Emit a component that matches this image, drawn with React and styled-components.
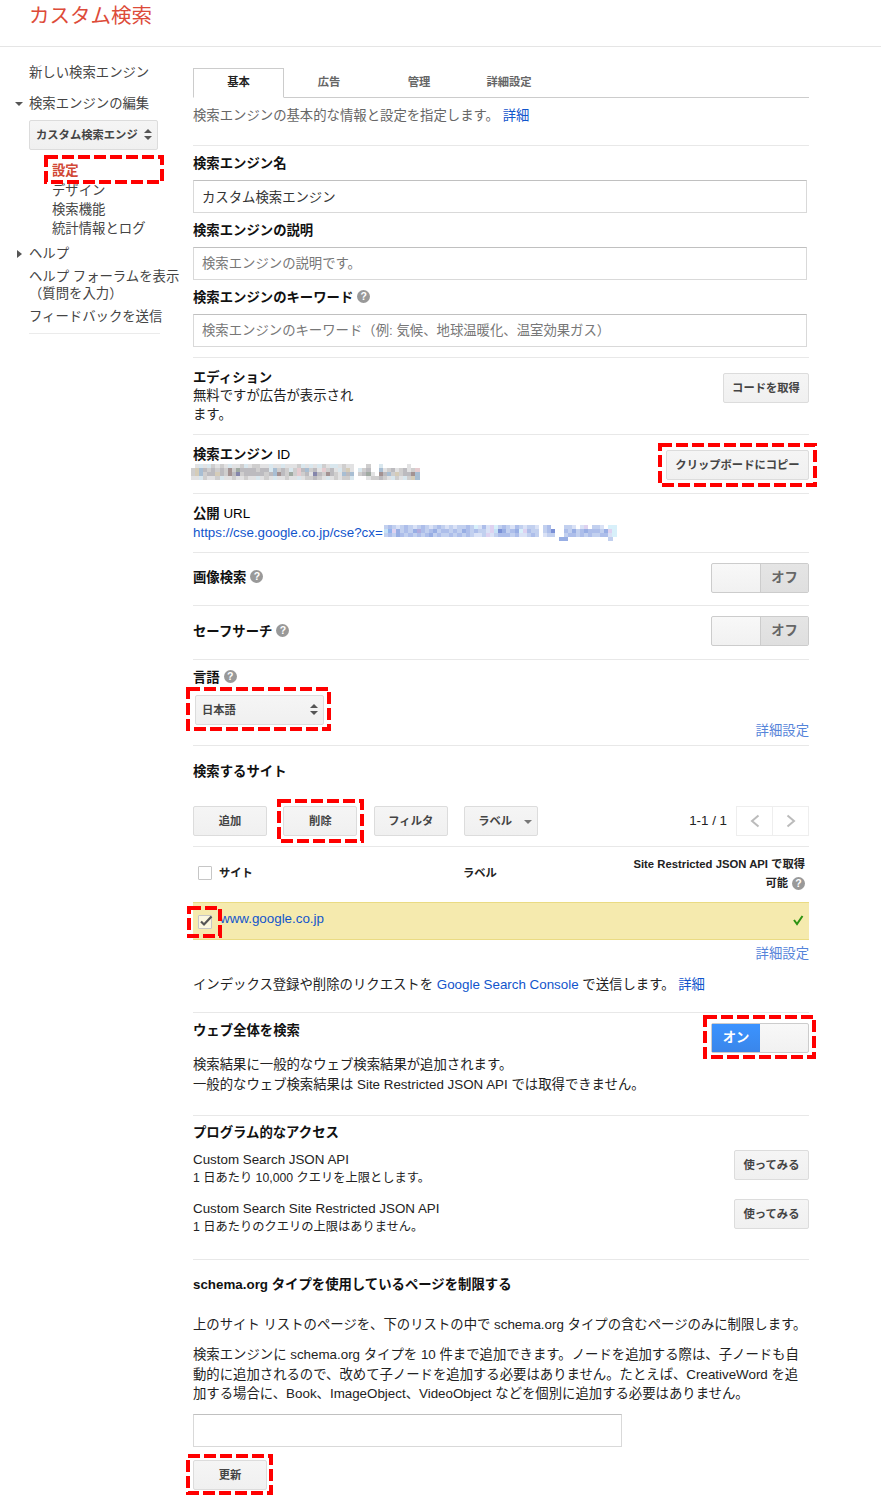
import React from "react";
import styled, { createGlobalStyle } from "styled-components";

const GlobalStyle = createGlobalStyle`
*{
  box-sizing: border-box;
}
body{
  margin: 0;
  background: #fff;
  color: #222;
  font-family: "Liberation Sans", "Noto Sans CJK JP", sans-serif;
  font-size: 13.36px;
  line-height: 19px;
}
a{
  color: #15c;
  text-decoration: none;
}
`

const Page = styled.div`
width: 881px;
height: 1500px;
overflow: hidden;
`

const Header = styled.header`
height: 47px;
border-bottom: 1px solid #e5e5e5;
padding-left: 29px;
`

const Logo = styled.h1`
margin: 0;
font-size: 20.5px;
line-height: 31px;
font-weight: 400;
color: #dd4b39;
`

const Columns = styled.div`
display: flex;
`

const Sidebar = styled.nav`
width: 193px;
flex: none;
padding: 16px 0 0 29px;
color: #444;
white-space: nowrap;
`

const NavItem = styled.div`
display: flex;
align-items: center;
height: ${props => props.$h || 19}px;
margin-top: ${props => props.$top || 0}px;
margin-left: ${props => props.$indent || 0}px;
color: ${props => props.$active ? "#d14836" : "inherit"};
font-weight: ${props => props.$active ? 700 : 400};
position: relative;
`

const Caret = styled.span`
width: 0;
height: 0;
margin-left: -14px;
margin-right: 6px;
border: 4px solid transparent;
border-top-color: #555;
border-bottom-width: 0;
${props => props.$right && `
border: 4px solid transparent;
border-left: 5px solid #555;
border-right-width: 0;
margin-left: -12px;
margin-right: 7px;
`}
`

const NavRule = styled.div`
width: 131px;
margin-top: 7px;
border-top: 1px solid #ebebeb;
`

const Main = styled.main`
width: 616px;
flex: none;
padding-top: 21px;
`

const Tabs = styled.div`
display: flex;
height: 30px;
border-bottom: 1px solid #ccc;
`

const Tab = styled.div`
width: ${props => props.$active ? 91 : 90}px;
height: 30px;
line-height: 27px;
text-align: center;
font-size: 11.3px;
font-weight: 700;
color: ${props => props.$active ? "#222" : "#666"};
border: 1px solid ${props => props.$active ? "#ccc" : "transparent"};
border-bottom-color: ${props => props.$active ? "#fff" : "transparent"};
`

const Section = styled.section`
height: ${props => props.$h}px;
padding-top: ${props => props.$pt || 0}px;
border-bottom: ${props => props.$last ? "none" : "1px solid #e8e8e8"};
`

const Row = styled.div`
display: flex;
justify-content: ${props => props.$start ? "flex-start" : "space-between"};
align-items: flex-start;
margin-top: ${props => props.$top || 0}px;
margin-left: ${props => props.$left || 0}px;
`

const Label = styled.div`
display: flex;
align-items: center;
height: 19px;
font-weight: 700;
color: #111;
white-space: pre;
`

const Latin = styled.span`
font-weight: 400;
color: #000;
`

const HelpDot = styled.span`
width: 13px;
height: 13px;
margin: -2px 0 0 4px;
border-radius: 50%;
background: #999;
color: #fff;
font-size: 10.5px;
font-weight: 700;
line-height: 13px;
text-align: center;
display: inline-block;
flex: none;
`

const Text = styled.div`
margin-top: ${props => props.$top || 0}px;
font-size: ${props => props.$small ? 12.25 : 13.36}px;
line-height: ${props => props.$lh || 19}px;
color: ${props => props.$muted ? "#666" : "#222"};
white-space: nowrap;
`

const Input = styled.input`
display: block;
width: ${props => props.$w || 614}px;
height: 33px;
margin: ${props => props.$top || 7}px 0 8px;
padding: 0 8px 1px;
border: 1px solid #d9d9d9;
border-top-color: #c0c0c0;
background: #fff;
color: #333;
font: inherit;
outline: none;
&::placeholder{
  color: #777;
  opacity: 1;
}
`

const Button = styled.button`
position: relative;
display: flex;
align-items: center;
justify-content: ${props => props.$menu ? "space-between" : "center"};
width: ${props => props.$w || 74}px;
height: 30px;
flex: none;
padding: ${props => props.$menu ? `0 5px 2px ${props.$left || 6}px` : "0 0 2px"};
border: 1px solid #dcdcdc;
border-radius: 2px;
background: linear-gradient(#f5f5f5, #f0f0f0);
color: #444;
font-family: inherit;
font-size: 11.3px;
font-weight: 700;
white-space: nowrap;
`

const Spinner = styled.span`
display: grid;
gap: 3px;
&::before, &::after{
  content: "";
  border: 4px solid transparent;
}
&::before{
  border-top: 0;
  border-bottom-color: #555;
}
&::after{
  border-bottom: 0;
  border-top-color: #555;
}
`

const DownArrow = styled.span`
margin-top: 3px;
border: 4px solid transparent;
border-top-color: #777;
border-bottom: 0;
`

const Switch = styled.div`
position: relative;
display: flex;
width: 98px;
height: 30px;
flex: none;
border: 1px solid #ccc;
border-radius: 2px;
background: linear-gradient(#f8f8f8, #f1f1f1);
`

const SwitchFace = styled.div`
width: 48px;
height: 28px;
line-height: 28px;
text-align: center;
font-size: 13.33px;
font-weight: 700;
color: ${props => props.$on ? "#fff" : "#666"};
background: ${props => props.$on ? "linear-gradient(#3b93ff, #3a86ea)" : "linear-gradient(#e5e5e5, #dfdfdf)"};
border-left: ${props => props.$on ? "none" : "1px solid #ccc"};
margin-left: ${props => props.$on ? "0" : "auto"};
`

const MoreLink = styled.a`
opacity: .72;
`

const Toolbar = styled.div`
display: flex;
gap: 16.4px;
margin-top: 25px;
`

const Pager = styled.div`
display: flex;
margin-left: auto;
line-height: 29px;
`

const PagerButton = styled.span`
display: flex;
align-items: center;
justify-content: center;
width: 37px;
height: 30px;
margin-left: ${props => props.$first ? 9 : -1}px;
border: 1px solid #eee;
`

const TableHead = styled.div`
display: grid;
grid-template-columns: 26px 239px 1fr;
height: 55px;
padding: 8px 4px 0 5px;
font-size: 11.3px;
font-weight: 700;
`

const HeadCell = styled.div`
padding-top: ${props => props.$pt || 0}px;
margin-left: ${props => props.$left || 0}px;
text-align: ${props => props.$right ? "right" : "left"};
line-height: 19px;
`

const CheckBox = styled.span`
display: block;
width: 14px;
height: 14px;
margin-top: ${props => props.$top}px;
border: 1px solid #c6c6c6;
border-radius: 1px;
background: rgba(255, 255, 255, .6);
position: relative;
`

const CheckMark = styled.svg`
display: block;
overflow: visible;
`

const SiteRow = styled.div`
display: flex;
height: 38px;
padding: 0 5px;
background: #f5eaae;
border: solid #eadb83;
border-width: 1px 0;
`

const SiteLink = styled.a`
margin: 6px auto 0 8px;
`

// marker drawn over a control, in px around its parent
const Marker = styled.svg`
position: absolute;
z-index: 2;
left: ${props => props.$x}px;
top: ${props => props.$y}px;
overflow: visible;
pointer-events: none;
`

const Callout = ({ x, y, w, h }) => (
  <Marker width={w} height={h} $x={x} $y={y}>
    <rect x="2" y="2" width={w - 4} height={h - 4} fill="none" stroke="#f00" strokeWidth="4" strokeDasharray="12 4" />
  </Marker>
)

const Help = () => <HelpDot>?</HelpDot>

const greys = {
  a: "#e2e2e3", b: "#cfcece", c: "#bcbbbf", d: "#d5ccb8", e: "#a39292",
  f: "#8586ab", g: "#a8bed3", h: "#e6ccd0", i: "#d9e7ee", j: "#a0aaa2",
}

const blues = {
  a: "#dae2f6", b: "#c2d0ef", c: "#adbeea", d: "#98aee4", e: "#7a90d6",
  f: "#c6e2f7", g: "#ded2f0", h: "#b0abdd", i: "#d8f0fa", j: "#92b4ee",
}

const idCells = [
  ".aiaibabaiaabiabbaaiaaiaaabiaiaibaiiabaa...b..i......a..",
  "bdgcbcbcbebjccccbccigbcbibhcgbcahbcaibda.ibc..gabcabcabh",
  "bdgbccdcbecfbcccccbcgecbjbhbcafcbecbagcg.bcja.ecgbdbcceg",
  "aaibaabiaabaabaaiabaiaabaaiabbcbaiababbi...abbcbaibaibdg",
]

const urlCells = [
  "bcbabcbabcbabcbababbcbiacagibcbacbabba.bc...bba.ag.bba.ii",
  "fjgdbcbdhcbcdbccbcbdcbcbbagfedbcdigcbb.bce..cbdbcdcccbdgi",
  "bcbdcbcbcbcdbcbbcbcbcbaabgabcccbcaabcb.abb..bccbcbcbbccai",
  "...........................................dd..........b.",
]

const MosaicSvg = styled.svg`
display: block;
flex: none;
margin-top: ${props => props.$top || 0}px;
margin-left: ${props => props.$left || 0}px;
`

const Mosaic = ({ cells, palette, top, left }) => (
  <MosaicSvg width={cells[0].length * 4.1} height="17" $top={top} $left={left} shapeRendering="crispEdges">
    {cells.map((line, row) => [...line].map((c, col) => palette[c] && (
      <rect key={`${row}-${col}`} x={col * 4.08} y={row * 4.1} width="4.1" height="4.1" fill={palette[c]} />
    )))}
  </MosaicSvg>
)

const Nav = () => (
  <Sidebar>
    <NavItem>新しい検索エンジン</NavItem>
    <NavItem $top={12}><Caret />検索エンジンの編集</NavItem>
    <NavItem $h={30} $top={7}>
      <Button $w={129} $menu>カスタム検索エンジ<Spinner /></Button>
    </NavItem>
    <NavItem $indent={23} $top={11} $active>
      設定
      <Callout x={-8} y={-6} w={120} h={29} />
    </NavItem>
    <NavItem $indent={23} $top={1}>デザイン</NavItem>
    <NavItem $indent={23}>検索機能</NavItem>
    <NavItem $indent={23}>統計情報とログ</NavItem>
    <NavItem $top={6}><Caret $right />ヘルプ</NavItem>
    <NavItem $top={5} $h={17}>ヘルプ フォーラムを表示</NavItem>
    <NavItem $h={17}>（質問を入力）</NavItem>
    <NavItem $top={5}>フィードバックを送信</NavItem>
    <NavRule />
  </Sidebar>
)

const Toggle = ({ on, children }) => (
  <Switch>
    <SwitchFace $on={on}>{on ? "オン" : "オフ"}</SwitchFace>
    {children}
  </Switch>
)

const App = () => {
  return (
    <Page>
      <GlobalStyle />
      <Header>
        <Logo>カスタム検索</Logo>
      </Header>
      <Columns>
        <Nav />
        <Main>
          <Tabs>
            <Tab $active>基本</Tab>
            <Tab>広告</Tab>
            <Tab>管理</Tab>
            <Tab>詳細設定</Tab>
          </Tabs>

          <Section $h={48} $pt={8}>
            <Text $muted>検索エンジンの基本的な情報と設定を指定します。 <a href="#more">詳細</a></Text>
          </Section>

          <Section $h={212} $pt={8}>
            <Label>検索エンジン名</Label>
            <Input defaultValue="カスタム検索エンジン" />
            <Label>検索エンジンの説明</Label>
            <Input placeholder="検索エンジンの説明です。" />
            <Label>検索エンジンのキーワード<Help /></Label>
            <Input placeholder="検索エンジンのキーワード（例: 気候、地球温暖化、温室効果ガス）" />
          </Section>

          <Section $h={77} $pt={10}>
            <Row>
              <div>
                <Label>エディション</Label>
                <Text $lh={18.5}>無料ですが広告が表示され<br />ます。</Text>
              </div>
              <Row $top={5}><Button $w={86}>コードを取得</Button></Row>
            </Row>
          </Section>

          <Section $h={59} $pt={10}>
            <Row>
              <div>
                <Label>検索エンジン <Latin>ID</Latin></Label>
                <Mosaic cells={idCells} palette={greys} left={-2} />
              </div>
              <Row $top={5}>
                <Button $w={143}>
                  クリップボードにコピー
                  <Callout x={-9} y={-8} w={159} h={44} />
                </Button>
              </Row>
            </Row>
          </Section>

          <Section $h={59} $pt={10}>
            <Label>公開 <Latin>URL</Latin></Label>
            <Row $start>
              <a href="#cse">https://cse.google.co.jp/cse?cx=</a>
              <Mosaic cells={urlCells} palette={blues} top={2} left={1} />
            </Row>
          </Section>

          <Section $h={53} $pt={10}>
            <Row>
              <Row $top={5}><Label>画像検索<Help /></Label></Row>
              <Toggle />
            </Row>
          </Section>

          <Section $h={54} $pt={10}>
            <Row>
              <Row $top={6}><Label>セーフサーチ<Help /></Label></Row>
              <Toggle />
            </Row>
          </Section>

          <Section $h={86} $pt={8}>
            <Label>言語<Help /></Label>
            <Row $top={8}>
              <Row $left={2}>
                <Button $w={129} $menu>
                  日本語<Spinner />
                  <Callout x={-10} y={-9} w={145} h={44} />
                </Button>
              </Row>
              <Text $top={26}><MoreLink href="#lang">詳細設定</MoreLink></Text>
            </Row>
          </Section>

          <Section $h={101} $pt={16}>
            <Label>検索するサイト</Label>
            <Toolbar>
              <Button>追加</Button>
              <Button>
                削除
                <Callout x={-7} y={-8} w={87} h={44} />
              </Button>
              <Button>フィルタ</Button>
              <Button $menu $left={13}>ラベル<DownArrow /></Button>
              <Pager>
                1-1 / 1
                <PagerButton $first>
                  <svg width="10" height="14" viewBox="0 0 10 14"><path d="M8.5 1.5L2 7L8.5 12.5" fill="none" stroke="#bbb" strokeWidth="2" /></svg>
                </PagerButton>
                <PagerButton>
                  <svg width="10" height="14" viewBox="0 0 10 14"><path d="M1.5 1.5L8 7L1.5 12.5" fill="none" stroke="#bbb" strokeWidth="2" /></svg>
                </PagerButton>
              </Pager>
            </Toolbar>
          </Section>

          <Section $h={166}>
            <TableHead>
              <CheckBox $top={11} />
              <HeadCell $pt={9} $left={-5}>サイト</HeadCell>
              <Row>
                <HeadCell $pt={9}>ラベル</HeadCell>
                <HeadCell $right>Site Restricted JSON API で取得<br />可能<Help /></HeadCell>
              </Row>
            </TableHead>
            <SiteRow>
              <CheckBox $top={12}>
                <CheckMark width="13" height="13"><path d="M2 5.5L5 8.5L12.5 0.5" fill="none" stroke="#555" strokeWidth="2.2" /></CheckMark>
                <Callout x={-12} y={-10} w={35} h={32} />
              </CheckBox>
              <SiteLink href="#site">www.google.co.jp</SiteLink>
              <svg width="11" height="36" viewBox="0 0 11 36"><path d="M1 17L4 21L9.5 13" fill="none" stroke="#2c9212" strokeWidth="2" /></svg>
            </SiteRow>
            <Row $top={4}>
              <span />
              <MoreLink href="#sites">詳細設定</MoreLink>
            </Row>
            <Text $top={12}>インデックス登録や削除のリクエストを <a href="#console">Google Search Console</a> で送信します。 <a href="#index">詳細</a></Text>
          </Section>

          <Section $h={103} $pt={8}>
            <Row>
              <Label>ウェブ全体を検索</Label>
              <Row $top={2}>
                <Toggle on>
                  <Callout x={-9} y={-9} w={113} h={44} />
                </Toggle>
              </Row>
            </Row>
            <Text $top={2} $lh={19.5}>検索結果に一般的なウェブ検索結果が追加されます。<br />一般的なウェブ検索結果は Site Restricted JSON API では取得できません。</Text>
          </Section>

          <Section $h={144} $pt={7}>
            <Label>プログラム的なアクセス</Label>
            <Row $top={8}>
              <div>
                <Text>Custom Search JSON API</Text>
                <Text $small>1 日あたり 10,000 クエリを上限とします。</Text>
              </div>
              <Button $w={75}>使ってみる</Button>
            </Row>
            <Row $top={11}>
              <div>
                <Text>Custom Search Site Restricted JSON API</Text>
                <Text $small>1 日あたりのクエリの上限はありません。</Text>
              </div>
              <Button $w={75}>使ってみる</Button>
            </Row>
          </Section>

          <Section $h={240} $pt={15} $last>
            <Label>schema.org タイプを使用しているページを制限する</Label>
            <Text $top={21}>上のサイト リストのページを、下のリストの中で schema.org タイプの含むページのみに制限します。</Text>
            <Text $top={11} $lh={19.5}>
              検索エンジンに schema.org タイプを 10 件まで追加できます。ノードを追加する際は、子ノードも自<br />
              動的に追加されるので、改めて子ノードを追加する必要はありません。たとえば、CreativeWord を追<br />
              加する場合に、Book、ImageObject、VideoObject などを個別に追加する必要はありません。
            </Text>
            <Input $w={429} $top={10} />
            <Row $top={13}>
              <Button>
                更新
                <Callout x={-8} y={-7} w={87} h={41} />
              </Button>
            </Row>
          </Section>
        </Main>
      </Columns>
    </Page>
  )
}

export default App;
